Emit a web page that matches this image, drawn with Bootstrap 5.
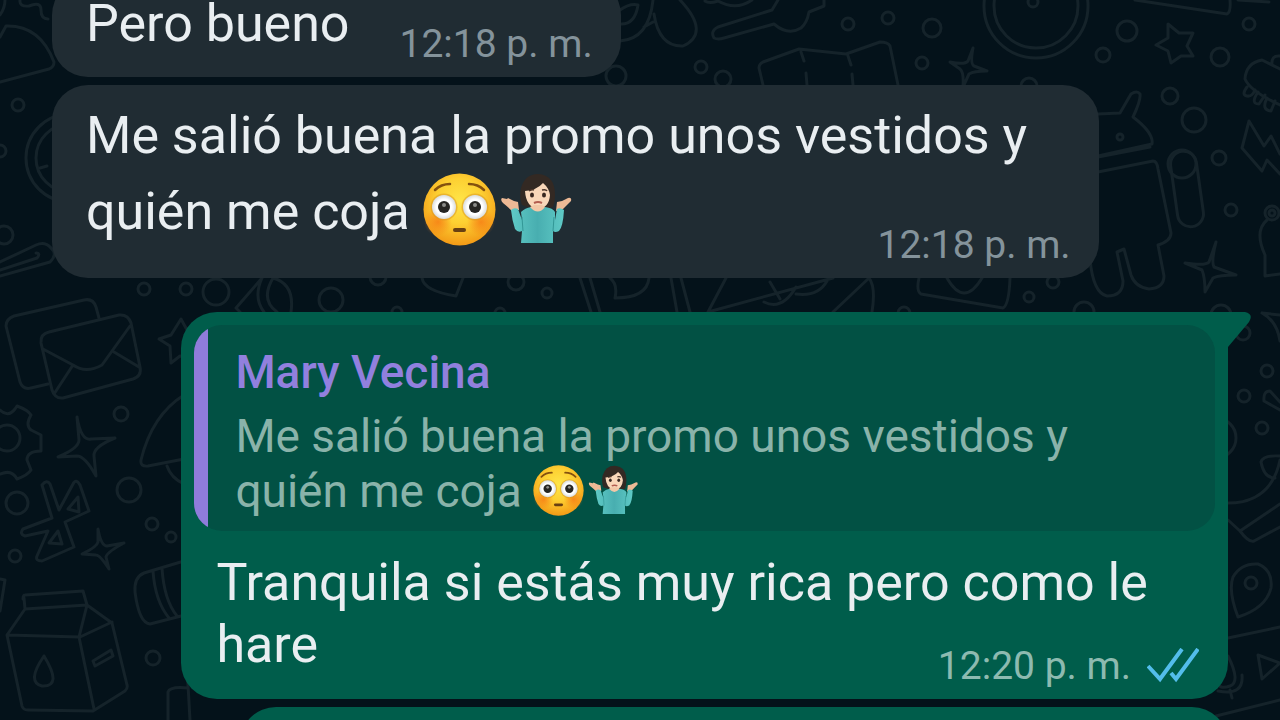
<!DOCTYPE html>
<html lang="es">
<head>
<meta charset="utf-8">
<meta name="viewport" content="width=device-width, initial-scale=1">
<title>Chat</title>
<link href="https://cdn.jsdelivr.net/npm/bootstrap@5.3.0/dist/css/bootstrap.min.css" rel="stylesheet">
<style>
body{background:#04121a;color:#e9eef1;font-family:Roboto,sans-serif}
.chat-view{height:100vh}
.doodles{top:0;left:0;width:1280px;height:720px;fill:none;stroke:#15232a;stroke-width:3;stroke-linejoin:round;stroke-linecap:round}
.thread{padding:0 52px;margin-top:-21px}
.bubble{border-radius:36px;padding:14px 28px 9px 34px;max-width:89%}
.incoming{background:#202c33}
.outgoing{background:#005d4b;padding:13px 13px 9px;margin-top:34px}
.msg{font-size:52px;line-height:60px}
.msg-short{margin:1px 50px 14px 0}
.msg-roomy{line-height:74px}
.msg-reply{line-height:62px;padding:21px 16px 0 22px}
.stamp{font-size:39px;line-height:48px;color:#84939b;white-space:nowrap}
.msg-roomy .stamp{margin-top:48px}
.outgoing .stamp{color:#8dbab0;margin-top:28px}
.quoted{background:#025144;border-radius:28px;padding:20px 27px 12px 41px;font-size:46px;line-height:55px;color:#8ab3aa;overflow:hidden}
.quoted::before{content:"";position:absolute;left:0;top:0;bottom:0;width:14px;background:#8f7cdb}
.sender{color:#9180de;font-weight:500;margin-bottom:9px}
.emoji{width:73px;height:73px;vertical-align:-17px}
.quoted .emoji{width:51px;height:51px;vertical-align:-9px}
.with-tail{border-top-right-radius:0}
.tail{left:100%;top:0;width:24px;height:37px;margin-left:-1px;fill:#005d4b}
.next{width:84%;height:120px}
</style>
</head>
<body>
<main class="chat-view position-relative overflow-hidden">
<svg class="doodles position-absolute" viewBox="0 0 1280 720" aria-hidden="true">
  <!-- small dots -->
  <g>
    <circle cx="18" cy="105" r="6"/><circle cx="0" cy="151" r="6"/><circle cx="4" cy="235" r="9"/>
    <circle cx="144" cy="289" r="6"/><circle cx="186" cy="289" r="6"/><circle cx="216" cy="292" r="13"/>
    <circle cx="121" cy="414" r="7"/><circle cx="129" cy="490" r="12"/><circle cx="17" cy="503" r="11"/>
    <circle cx="15" cy="556" r="6"/><circle cx="152" cy="524" r="6"/><circle cx="171" cy="537" r="5"/>
    <circle cx="153" cy="658" r="7"/><circle cx="616" cy="76" r="10"/><circle cx="701" cy="67" r="6"/>
    <circle cx="723" cy="79" r="8"/><circle cx="848" cy="24" r="6"/><circle cx="888" cy="18" r="6"/>
    <circle cx="932" cy="28" r="9"/><circle cx="922" cy="63" r="6"/><circle cx="1127" cy="31" r="10"/>
    <circle cx="1103" cy="55" r="7"/><circle cx="1249" cy="24" r="6"/><circle cx="1220" cy="57" r="9"/>
    <circle cx="1170" cy="96" r="8"/><circle cx="1194" cy="120" r="12"/><circle cx="1182" cy="164" r="14"/>
    <circle cx="1219" cy="158" r="7"/><circle cx="1231" cy="210" r="6"/><circle cx="1029" cy="86" r="8"/>
    <circle cx="1033" cy="2" r="5"/><circle cx="331" cy="300" r="12"/><circle cx="378" cy="277" r="8"/>
    <circle cx="516" cy="282" r="8"/><circle cx="547" cy="293" r="5"/><circle cx="1053" cy="282" r="6"/>
    <circle cx="1029" cy="297" r="5"/><circle cx="1084" cy="312" r="10"/><circle cx="1221" cy="315" r="10"/>
    <circle cx="1243" cy="333" r="7"/><circle cx="1267" cy="371" r="6"/><circle cx="1244" cy="396" r="6"/>
    <circle cx="1262" cy="428" r="6"/><circle cx="1216" cy="438" r="20"/>
    <circle cx="500" cy="313" r="5"/><circle cx="397" cy="312" r="5"/><circle cx="904" cy="313" r="6"/>
  </g>
  <!-- fan, clock and clip -->
  <path d="M0 15Q5 8 5 0M20 0q-1 7 9 6 12-5 12 4 0 9 7 9M0 37 6 26Q40 25 54 62q0 5-5 7L0 82"/>
  <circle cx="70" cy="158" r="44"/><circle cx="70" cy="158" r="34"/><path d="m40 168 7-2"/>
  <path d="M0 276 50 262q8-8 1-14-6-7-15-3L0 262M0 270l37-12q4-5-1-5"/>
  <!-- letters -->
  <path d="M99 318l-3-11q-3-9-12-7L14 316q-8 3-8 10l14 56q3 8 11 6l17-4"/>
  <path d="m49 332 70-17q9-1 12 8l9 44q2 9-7 12l-70 19q-8 1-11-8l-11-47q-1-9 8-11M43 349l30 16q13 9 29 0l28-39M54 394l19-29M114 352l25 15"/>
  <path d="m181 319 6 11 10 1-9 12 4 16-12-3-9 7-1-17-11-7 12-4Z"/>
  <!-- gear and sparkles -->
  <circle cx="7" cy="438" r="13"/>
  <path d="M0 410q8 8 15-1l2-3q11 4 14 9-6 10 0 15l10 5v16q-14 0-14 9l4 10q-3 5-14 9-5-10-17-5"/>
  <path d="M77 417q4 24 14 22l24-1q-22 9-21 18l2 20q-11-20-19-20l-19 1q21-9 21-17Z"/>
  <path d="M98 529q3 17 9 17l17-3q-17 9-18 14l3 12q-9-14-13-14l-14-1q15-7 16-12ZM1216 242q-5 20-2 25l22 8q-17 0-23 3l-8 14q0-15-3-22l-17-7q21 3 24-1ZM973 48q-3 16 1 18l13 5q-13 0-18 3l-6 13q1-15-3-18l-10-7q15 3 18-1ZM1262 313l18 2M1262 313q15 8 18 28"/>
  <!-- rocket, bluetooth and capsule -->
  <path d="M184 395q-32 20-43 65-1 7 7 6l36-7M167 466q4 12 17 18M42 485q5-6 8-1l9 26 14-26q3-6 7 1l9 26-24 11 9 25-32 14q-7 0-5-5l11-25-23 5q-6-2-2-7l29-11ZM68 509l10-12 1 15ZM49 543l9-12 4 13Z"/>
  <path d="m184 561-40 12q-10 4-9 19 4 31 15 32l35-9M153 571q2 30 16 47M162 568q2 32 15 48"/>
  <!-- milk carton -->
  <path d="m24 598 1 11 62-4-4-14-58 4q-2 0-2 4M25 609 7 635l15 71q1 4 6 4l65 1 32-20q3-3 2-6l-15-62-25-18-8 32 15 72M7 635l73 2 32-15M93 661l18-11 2 6-18 10ZM44 656q-18 26-2 30 21 1 2-30M0 579l5 1-5 31M168 720v-28q2-6 20-4M186 650l4 70"/>
  <!-- bow, wrench, map -->
  <path d="M620 41q29-2 33-41M654 14q5 33 29 32 28-13-3-46M653 22l-9 5M620 10q10-7 18-5-3 20-18 19M705 1q4 3 13 0 18 10 34-1M778 0l-6 10-54 17q-8 4-4 11 4 2 10 0l50-14q14 12 27 4 6-5 8-16l15-6V0"/>
  <path d="m763 85-4-17q0-4 4-6l36-13 47 5 34-12q8 0 10 4l8 39M801 52l3 9M806 73l1 12M848 56l3 9M852 74l1 11"/>
  <!-- plate, star and insect -->
  <circle cx="1036" cy="6" r="52"/><circle cx="1036" cy="6" r="42"/>
  <path d="m1135 0 92 14q4-2 3-14M1238 0l31 2M1168 24l11 9h14l-6 13 6 10-12 0-10 7-3-12-12-6 12-7Z"/>
  <path d="m1280 69-18-9q-16 3-17 19 5 12 35 26M1272 65q-1-10 8-9M1247 87q-6 8 0 9 5 1 8-6M1258 92q-8 12 1 12l6-9M1267 98q-6 12 4 13l4-10"/>
  <!-- robot and lightning -->
  <path d="m1098 114 22-1 11-19q6-4 9 0 1 6-7 23 21 16 19 27l-54 12M1098 157l52-10M1098 172l55-11q4 0 5 8l13 64q0 8-13 12l6 31q0 12-15 13-14-2-18-14l-7-26-7 3 6 29q0 15-16 15-14-3-17-37"/>
  <circle cx="1120" cy="137" r="3"/>
  <rect x="1174" y="151" width="26" height="76" rx="13" transform="rotate(-8 1187 189)"/>
  <path d="m1249 121-7 27 20 23 5-11 13 14M1249 121l15 25 7-10 9 18"/>
  <circle cx="1272" cy="213" r="7"/><circle cx="1272" cy="213" r="3"/><path d="M1267 220q-13 11-2 35v21l15-2"/>
  <!-- pictures in the gap between messages -->
  <path d="m262 278-26 30 4 4M262 278q-9 20 2 34M273 278q-13 22 4 34M273 278q22 6 18 34M422 278q2 13 34 18l7-18M580 278l11 34M590 278l10 34M610 278q8 6 5 20 32 0 34-20M671 278l6 34M681 278l9 34M726 278l-18 34 125-34M770 282l10 17M764 302q18 9 32-15M796 294q22 3 31-13M833 312l36-34M869 278q7 9 3 34M919 278q-3 13 2 16l82 14q6-3 7-30M947 278q17 30 35 0"/>
  <!-- leaf, pin and player -->
  <path d="m1280 402-10-11q-7 0-6 10l16 9M1280 456q-17-1-19 6 3 16 14 16M1228 503q43 0 52-43M1228 520l12 11 40-27M1240 531q9 12 14 10l26-14M1238 617q-10-26-5-40 8-14 25-13 15 6 13 24-5 20-33 29"/>
  <circle cx="1251" cy="583" r="6"/>
  <path d="m1228 638 52-11M1216 716l64-16M1258 655l4 24 18-16-22-8M1228 656q13 26 2 30t-13-4M1218 691q26 5 24-16M1230 690l2 8"/>
</svg>

<svg width="0" height="0" class="position-absolute" aria-hidden="true">
  <defs>
    <radialGradient id="face" cx=".5" cy=".38" r=".62"><stop offset="0" stop-color="#ffe548"/><stop offset=".5" stop-color="#fdd032"/><stop offset="1" stop-color="#f39a16"/></radialGradient>
    <radialGradient id="blush"><stop offset="0" stop-color="#f77b14" stop-opacity=".8"/><stop offset="1" stop-color="#f77b14" stop-opacity="0"/></radialGradient>
    <radialGradient id="eye"><stop offset=".65" stop-color="#fff"/><stop offset="1" stop-color="#d9dcdc"/></radialGradient>
    <linearGradient id="shirt" x1="0" x2="1"><stop offset="0" stop-color="#5fcac6"/><stop offset=".5" stop-color="#48aeb0"/><stop offset="1" stop-color="#5fcac6"/></linearGradient>
    <symbol id="flushed" viewBox="0 0 73 73">
      <circle cx="36.500" cy="36.500" r="36" fill="url(#face)"/>
      <circle cx="15" cy="49" r="14" fill="url(#blush)"/><circle cx="58" cy="49" r="14" fill="url(#blush)"/>
      <circle cx="21" cy="34" r="13.500" fill="#d99320" opacity=".5"/><circle cx="52" cy="34" r="13.500" fill="#d99320" opacity=".5"/>
      <circle cx="21" cy="34" r="12" fill="url(#eye)"/><circle cx="52" cy="34" r="12" fill="url(#eye)"/>
      <circle cx="21" cy="34" r="6" fill="#262522"/><circle cx="52" cy="34" r="6" fill="#262522"/>
      <circle cx="21" cy="32" r="2" fill="#8c8c88"/><circle cx="52" cy="32" r="2" fill="#8c8c88"/>
      <path d="M12 17q6-6 15-6M46 11q9 0 15 6" fill="none" stroke="#84510f" stroke-width="2.500" stroke-linecap="round"/>
      <rect x="30" y="55" width="13" height="4" rx="2" fill="#684012"/>
    </symbol>
    <symbol id="shrug" viewBox="0 0 73 73">
      <path d="M22 32q-3-8-1-17Q25 1 38 1q17 1 17 21 0 7-2 12-14 5-31-2" fill="#332923"/>
      <path d="M33 30h11v9H33z" fill="#e8b896"/>
      <path d="M25 18q12-1 18-8 6 5 7 12-1 13-12 14-12-2-13-18" fill="#f9d7b9"/>
      <path d="M29 18q3-2 5-1M42 17q4-1 5 1" stroke="#4b3428" stroke-width="1.500" fill="none"/>
      <ellipse cx="32" cy="22" rx="2" ry="2.500" fill="#382720"/><ellipse cx="44" cy="22" rx="2" ry="2.500" fill="#382720"/>
      <path d="M34 30q4-2 8 0" stroke="#b35d50" stroke-width="2" fill="none"/>
      <path d="M12 38q-4-4-9-8-3-3-1-5l5 1 1-1 6 3 4 1 1 8ZM56 38l1-9 5-1 6-3q4-1 3 3-4 4-8 8Z" fill="#edb995"/>
      <path d="M11 37q3-3 7-1l4 11-1-8q4-4 10-5 7 5 14 0 8 1 10 5v8l2-11q3-2 7 1-1 17-5 21-4 2-6 0v12H21l1-12q-4 2-7-2-3-9-4-19" fill="url(#shirt)"/>
      <path d="M30 34q8 9 15 0l-3-2h-8Z" fill="#f2c7a6"/>
      <path d="m22 44 1 14M54 44l-1 14" stroke="#329796" fill="none"/>
    </symbol>
  </defs>
</svg>

<section class="thread position-relative d-flex flex-column align-items-start" aria-label="Mensajes">
  <article class="bubble incoming d-flex align-items-end">
    <p class="msg msg-short">Pero bueno</p>
    <time class="stamp">12:18 p. m.</time>
  </article>
  <article class="bubble incoming mt-2">
    <div class="msg msg-roomy clearfix">Me salió buena la promo unos vestidos y quién me coja <svg class="emoji" role="img" aria-label="Cara sonrojada"><use href="#flushed"/></svg><svg class="emoji ms-1" role="img" aria-label="Mujer encogida de hombros"><use href="#shrug"/></svg><time class="stamp float-end">12:18 p. m.</time></div>
  </article>
  <article class="bubble outgoing with-tail position-relative align-self-end">
    <svg class="tail position-absolute" viewBox="0 0 24 37" aria-hidden="true"><path d="M0 0h18q9 2 4 10L1 35v2H0Z"/></svg>
    <blockquote class="quoted position-relative mb-0">
      <div class="sender">Mary Vecina</div>
      <div>Me salió buena la promo unos vestidos y quién me coja <svg class="emoji" role="img" aria-label="Cara sonrojada"><use href="#flushed"/></svg><svg class="emoji ms-1" role="img" aria-label="Mujer encogida de hombros"><use href="#shrug"/></svg></div>
    </blockquote>
    <div class="msg msg-reply clearfix">Tranquila si estás muy rica pero como le hare<time class="stamp float-end d-flex align-items-center">12:20 p. m.<svg class="ms-3" width="52" height="36" viewBox="0 0 52 36" fill="none" stroke="#53bdeb" stroke-width="4" aria-label="Leído"><path d="m1 18 12 13L35 1M24 25l5 6L51 1"/></svg></time></div>
  </article>
  <article class="bubble outgoing next align-self-end mt-2" aria-label="Mensaje siguiente"></article>
</section>
</main>
<script src="https://cdn.jsdelivr.net/npm/bootstrap@5.3.0/dist/js/bootstrap.bundle.min.js"></script>
</body>
</html>
